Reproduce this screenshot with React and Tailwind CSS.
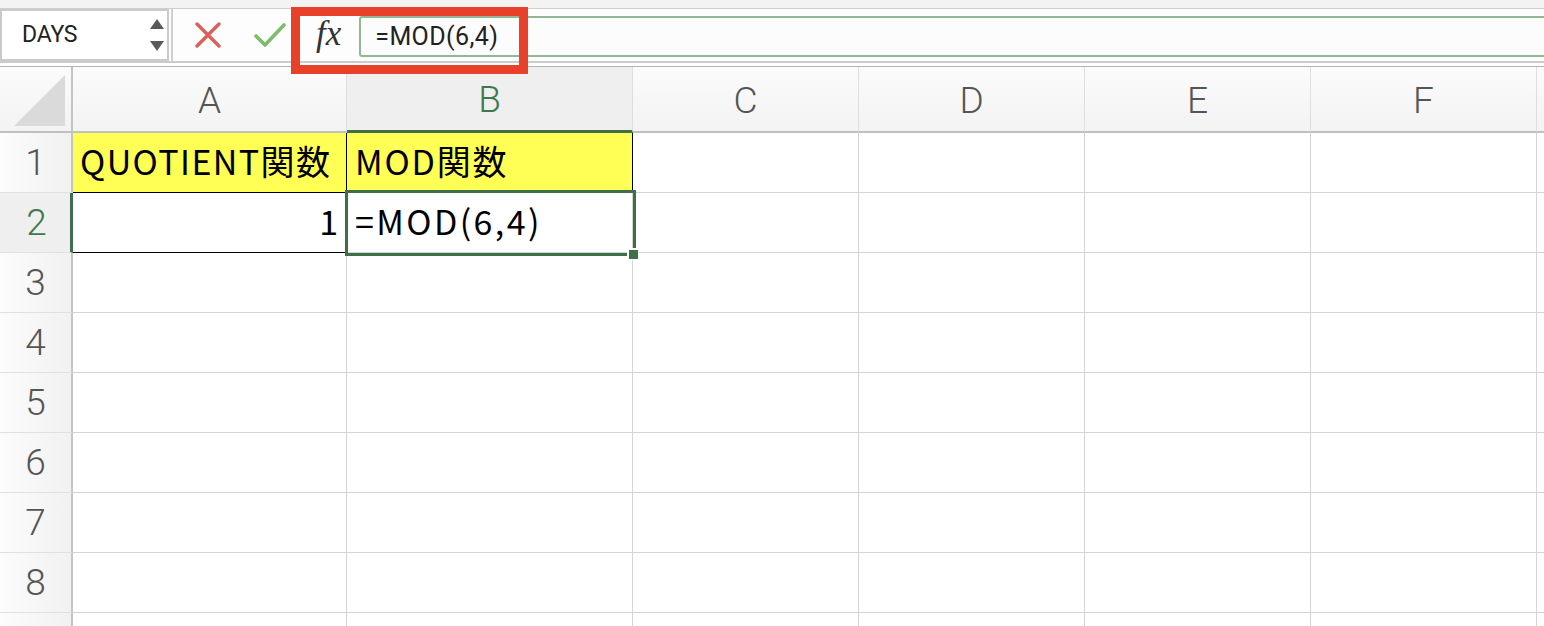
import React from 'react';

const cols = ['A', 'B', 'C', 'D', 'E', 'F', ''];
const widths = ['w-[274px]', 'w-[286px]', 'w-[226px]', 'w-[226px]', 'w-[226px]', 'w-[226px]', 'w-[226px]'];
const rows = [1, 2, 3, 4, 5, 6, 7, 8, 9];

const cellFont = { fontFamily: '"Noto Sans CJK JP", "Noto Sans", sans-serif' };

function NameBox() {
  return (
    <div className="w-[169px] h-full bg-white border-2 border-[#cacaca] flex items-center justify-between pl-[20px] pr-[3px]">
      <span className="text-[23px] text-[#222] font-['Roboto',sans-serif] tracking-[-0.2px]">DAYS</span>
      <div className="flex flex-col gap-[12px]">
        <svg width="14" height="10" viewBox="0 0 14 10"><path d="M7 0 L14 10 L0 10 Z" fill="#5a5a5a" /></svg>
        <svg width="14" height="10" viewBox="0 0 14 10"><path d="M0 0 L14 0 L7 10 Z" fill="#5a5a5a" /></svg>
      </div>
    </div>
  );
}

function FormulaBar() {
  return (
    <div className="relative h-[54px] flex bg-[#fdfdfd] border-b-2 border-[#cbcbcb]">
      <NameBox />
      <div className="w-[2px] h-full bg-[#d0d0d0] ml-[2px]" />
      {/* cancel / enter */}
      <div className="flex items-center pl-[22px] gap-[33px]">
        <svg width="26" height="26" viewBox="0 0 26 26">
          <path d="M2 2 L24 24 M24 2 L2 24" stroke="#d9605b" strokeWidth="3.4" strokeLinecap="round" />
        </svg>
        <svg width="32" height="26" viewBox="0 0 32 26">
          <path d="M2 14 L11 23 L30 3" fill="none" stroke="#7cbd6c" strokeWidth="3.6" strokeLinecap="round" strokeLinejoin="round" />
        </svg>
      </div>
      <div className="flex items-center pl-[30px] pr-[18px]">
        <span className="text-[35px] italic text-[#333] font-['Liberation_Serif',serif] leading-none pb-[4px]">fx</span>
      </div>
      <div className="flex-1 mt-[7px] mb-[4px] bg-[#fcfcfc] border-2 border-r-0 border-[#93b794] rounded-l-[3px] flex items-center pl-[14px]">
        <span className="text-[25px] text-[#222] font-['Roboto',sans-serif] tracking-[0.4px]">=MOD(6,4)</span>
      </div>
      {/* annotation box */}
      <div className="absolute left-[291px] top-[-2px] w-[237px] h-[67px] border-[9px] border-[#e8402a] z-20" />
    </div>
  );
}

function ColHeader({ label, width, selected }) {
  return (
    <div
      className={`${width} shrink-0 h-full flex items-center justify-center border-r border-[#dedede] ${
        selected ? 'bg-[#efefef] border-b-[3px] border-b-[#3d7048] text-[#3d7a4b]' : 'bg-gradient-to-b from-[#fbfbfb] to-[#f3f3f3] border-b-2 border-b-[#c0c0c0] text-[#555]'
      }`}
    >
      <span className="text-[37px] font-light font-['Roboto',sans-serif] leading-none pt-[2px]">{label}</span>
    </div>
  );
}

function RowHeader({ n }) {
  const sel = n === 2;
  return (
    <div
      className={`w-[73px] shrink-0 h-full flex items-center justify-center border-b border-[#e0e0e0] ${
        sel ? 'bg-[#efefef] border-r-[3px] border-r-[#3d7048] text-[#3d7a4b] pl-[3px]' : 'bg-gradient-to-r from-[#fcfcfc] to-[#f1f1f1] border-r-2 border-r-[#c4c4c4] text-[#555]'
      }`}
    >
      {n < 9 && <span className="text-[37px] font-light font-['Roboto',sans-serif] leading-none">{n}</span>}
    </div>
  );
}

function Cell({ r, c, width }) {
  const base = `${width} shrink-0 h-full relative border-r border-b flex items-center pb-[3px]`;
  if (r === 1 && c === 0) {
    return (
      <div className={`${base} bg-[#ffff55] border-black px-[7px]`} style={cellFont}>
        <span className="text-[34px] text-black leading-none tracking-[1.4px]">QUOTIENT関数</span>
      </div>
    );
  }
  if (r === 1 && c === 1) {
    return (
      <div className={`${base} bg-[#ffff55] border-black px-[8px]`} style={cellFont}>
        <span className="text-[34px] text-black leading-none tracking-[1.8px]">MOD関数</span>
      </div>
    );
  }
  if (r === 2 && c === 0) {
    return (
      <div className={`${base} bg-white border-black justify-end px-[8px]`} style={cellFont}>
        <span className="text-[34px] text-black leading-none">1</span>
      </div>
    );
  }
  if (r === 2 && c === 1) {
    return (
      <div className={`${base} bg-white border-[#d4d4d4] px-[8px]`} style={cellFont}>
        <span className="text-[34px] text-black leading-none tracking-[2.4px]">=MOD(6,4)</span>
        {/* active cell */}
        <div className="absolute z-10 -left-[2px] -top-[3px] w-[291px] h-[66px] border-[3px] border-[#3d7048]" />
        <div className="absolute z-10 left-[280px] top-[55px] w-[12px] h-[12px] bg-white" />
        <div className="absolute z-10 left-[282px] top-[57px] w-[9px] h-[9px] bg-[#3d7048]" />
      </div>
    );
  }
  return <div className={`${base} bg-white border-[#d4d4d4]`} />;
}

export default function App() {
  return (
    <div className="w-[1544px] h-[626px] overflow-hidden bg-white select-none">
      <div className="h-[9px] bg-[#f3f3f3] border-b border-[#cfcfcf]" />
      <FormulaBar />
      <div className="h-[4px] bg-white border-b border-[#b3b3b3]" />
      {/* column headers */}
      <div className="h-[66px] flex">
        <div className="w-[73px] shrink-0 h-full bg-gradient-to-b from-[#fbfbfb] to-[#f3f3f3] border-r-2 border-[#c4c4c4] border-b-2 border-b-[#c0c0c0] flex items-end justify-end pr-[6px] pb-[5px]">
          <svg width="51" height="51" viewBox="0 0 51 51"><path d="M51 0 L51 51 L0 51 Z" fill="#dadada" /></svg>
        </div>
        {cols.map((c, i) => (
          <ColHeader key={i} label={c} width={widths[i]} selected={c === 'B'} />
        ))}
      </div>
      {rows.map(r => (
        <div key={r} className="h-[60px] flex">
          <RowHeader n={r} />
          {cols.map((c, i) => (
            <Cell key={i} r={r} c={i} width={widths[i]} />
          ))}
        </div>
      ))}
    </div>
  );
}
